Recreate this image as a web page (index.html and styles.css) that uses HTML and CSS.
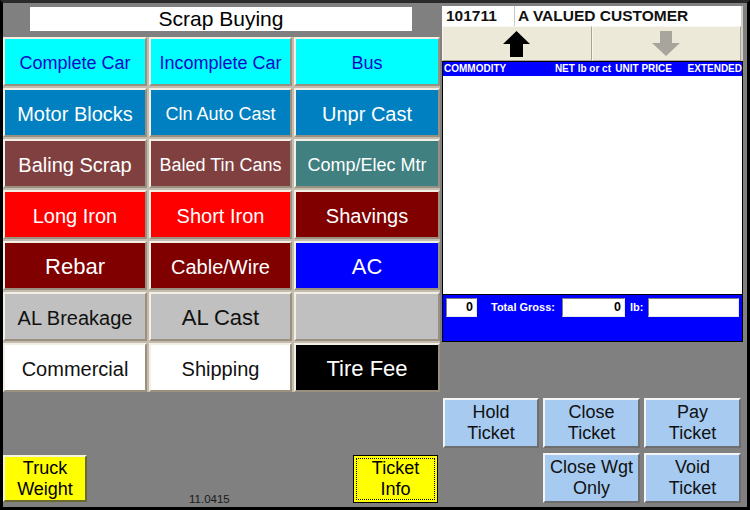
FILE: index.html
```html
<!DOCTYPE html>
<html>
<head>
<meta charset="utf-8">
<link rel="stylesheet" href="styles.css">
</head>
<body>
<div class="app">
  <div class="left">
    <div class="title-row"><div class="title">Scrap Buying</div></div>
    <div class="grid">
      <div class="cell cyan">Complete Car</div>
      <div class="cell cyan">Incomplete Car</div>
      <div class="cell cyan">Bus</div>
      <div class="cell steel lg">Motor Blocks</div>
      <div class="cell steel">Cln Auto Cast</div>
      <div class="cell steel lg">Unpr Cast</div>
      <div class="cell brown lg">Baling Scrap</div>
      <div class="cell brown">Baled Tin Cans</div>
      <div class="cell teal">Comp/Elec Mtr</div>
      <div class="cell red lg">Long Iron</div>
      <div class="cell red lg">Short Iron</div>
      <div class="cell maroon lg">Shavings</div>
      <div class="cell maroon xl">Rebar</div>
      <div class="cell maroon lg">Cable/Wire</div>
      <div class="cell blue xl">AC</div>
      <div class="cell silver lg">AL Breakage</div>
      <div class="cell silver xl">AL Cast</div>
      <div class="cell silver"></div>
      <div class="cell white lg">Commercial</div>
      <div class="cell white lg">Shipping</div>
      <div class="cell black xl">Tire Fee</div>
    </div>
    <div class="bottom">
      <div class="ybtn truck">Truck<br>Weight</div>
      <div class="version">11.0415</div>
      <div class="ybtn ticket">Ticket<br>Info</div>
    </div>
  </div>
  <div class="right">
    <div class="cust">
      <div class="cust-id">101711</div>
      <div class="cust-name">A VALUED CUSTOMER</div>
    </div>
    <div class="arrows">
      <div class="arrow-btn">
        <svg width="27" height="26" viewBox="0 0 27 26"><path d="M13.5 0 L27 13 L20 13 L20 26 L7 26 L7 13 L0 13 Z" fill="#000"/></svg>
      </div>
      <div class="arrow-btn">
        <svg width="28" height="25" viewBox="0 0 28 25"><path d="M8 0 H20 V12 H28 L14 25 L0 12 H8 Z" fill="#A8A59D"/></svg>
      </div>
    </div>
    <div class="list">
      <div class="list-head">
        <span class="h1">COMMODITY</span>
        <span class="h2">NET lb or ct</span>
        <span class="h3">UNIT PRICE</span>
        <span class="h4">EXTENDED</span>
      </div>
    </div>
    <div class="totals">
      <div class="box b1">0</div>
      <div class="lbl lbl1">Total Gross:</div>
      <div class="box b2">0</div>
      <div class="lbl lbl2">lb:</div>
      <div class="box b3"></div>
    </div>
    <div class="actions">
      <div class="act">Hold<br>Ticket</div>
      <div class="act">Close<br>Ticket</div>
      <div class="act">Pay<br>Ticket</div>
      <div class="act second">Close Wgt<br>Only</div>
      <div class="act">Void<br>Ticket</div>
    </div>
  </div>
</div>
</body>
</html>
```

FILE: styles.css
```css
* { box-sizing: border-box; }
html, body { margin: 0; padding: 0; }
body { font-family: "Liberation Sans", Arial, sans-serif; background: #808080; }

.app {
  width: 750px;
  height: 510px;
  display: flex;
  background: #808080;
  border: 3px solid #000;
  border-top-color: #2a2a2a;
}

/* left column */
.left {
  width: 437px;
  display: flex;
  flex-direction: column;
}
.title-row {
  height: 34px;
  padding: 4px 0 0 27px;
}
.title {
  width: 382px;
  height: 24px;
  background: #fff;
  color: #000;
  font-size: 21px;
  line-height: 24px;
  text-align: center;
}
.grid {
  display: grid;
  grid-template-columns: 144px 143px 146px;
  grid-auto-rows: 49px;
  gap: 2px;
  background: #C4BCAE;
}
.cell {
  display: flex;
  align-items: center;
  justify-content: center;
  padding-top: 3px;
  border: 2px solid;
  border-color: #F4EFE5 #9A9080 #9A9080 #F4EFE5;
  font-size: 18px;
  white-space: nowrap;
}
.cell.lg { font-size: 20px; }
.cell.xl { font-size: 22px; }
.cyan { background: #00FFFF; color: #0A0AC8; }
.steel { background: #0080C0; color: #fff; }
.brown { background: #804040; color: #fff; }
.teal { background: #408080; color: #fff; }
.red { background: #FF0000; color: #fff; }
.maroon { background: #800000; color: #fff; }
.blue { background: #0000FF; color: #fff; }
.silver { background: #C0C0C0; color: #111; }
.white { background: #fff; color: #111; }
.black { background: #000; color: #fff; }

.bottom {
  flex: 1;
  display: flex;
  align-items: flex-end;
  padding-bottom: 5px;
}
.ybtn {
  background: #FFFF00;
  color: #000;
  font-size: 18px;
  line-height: 21px;
  text-align: center;
  display: flex;
  align-items: center;
  justify-content: center;
}
.truck {
  width: 84px;
  height: 47px;
  border: 2px solid;
  border-color: #F4F4DC #6a6a30 #6a6a30 #F4F4DC;
}
.version {
  margin-left: 102px;
  margin-bottom: -4px;
  font-size: 11.5px;
  line-height: 13px;
  color: #1a1a1a;
}
.ticket {
  margin-left: auto;
  margin-right: 2px;
  margin-bottom: -1px;
  width: 85px;
  height: 48px;
  border: 1px solid #000;
  outline: 1px dotted #000;
  outline-offset: -4px;
}

/* right column */
.right {
  width: 301px;
  margin-left: 2px;
  padding-top: 3px;
  display: flex;
  flex-direction: column;
}
.cust {
  height: 20px;
  display: flex;
  background: #fff;
  color: #111;
  font-weight: bold;
  font-size: 15.5px;
  line-height: 20px;
  border-right: 2px solid #D4D0C8;
}
.cust-id {
  width: 73px;
  padding-left: 4px;
  border-right: 1px solid #C8C8C8;
}
.cust-name { padding-left: 3px; }

.arrows {
  height: 35px;
  display: flex;
  background: #ECE9D8;
  border-right: 2px solid #D4D0C8;
}
.arrow-btn {
  flex: 1;
  display: flex;
  align-items: center;
  justify-content: center;
  border: 1px solid;
  border-color: #F8F6EE #A8A496 #A8A496 #F8F6EE;
}

.list {
  height: 234px;
  background: #fff;
  border: 1px solid #000;
}
.list-head {
  height: 14px;
  background: #0000FF;
  color: #fff;
  font-weight: bold;
  font-size: 10px;
  line-height: 14px;
  display: flex;
  white-space: nowrap;
  padding-left: 1px;
}
.h1 { width: 112px; }
.h2 { width: 61px; }
.h3 { width: 73px; }

.totals {
  height: 47px;
  background: #0000FF;
  border: 1px solid #000;
  border-top: none;
  display: flex;
  align-items: flex-start;
  padding: 3px 0 0 3px;
}
.box {
  height: 19px;
  background: #fff;
  border: 1px solid;
  border-color: #808080 #E8E8E8 #E8E8E8 #808080;
  color: #000;
  font-weight: bold;
  font-size: 12.5px;
  line-height: 17px;
  text-align: right;
  padding-right: 3px;
}
.b1 { width: 31px; }
.b2 { width: 63px; margin-left: 7px; }
.b3 { width: 91px; margin-left: 5px; }
.lbl {
  color: #fff;
  font-weight: bold;
  font-size: 11px;
  line-height: 19px;
}
.lbl1 { margin-left: 14px; }
.lbl2 { margin-left: 5px; }

.actions {
  margin-top: 56px;
  padding-left: 1px;
  display: grid;
  grid-template-columns: 96px 97px 97px;
  grid-template-rows: 50px 50px;
  gap: 5px 4px;
}
.act {
  background: #A6CAF0;
  border: 2px solid;
  border-color: #F4F4F4 #6E6E6E #6E6E6E #F4F4F4;
  display: flex;
  align-items: center;
  justify-content: center;
  text-align: center;
  font-size: 18px;
  line-height: 21px;
  color: #111;
}
.act.second { grid-column: 2; }
```
